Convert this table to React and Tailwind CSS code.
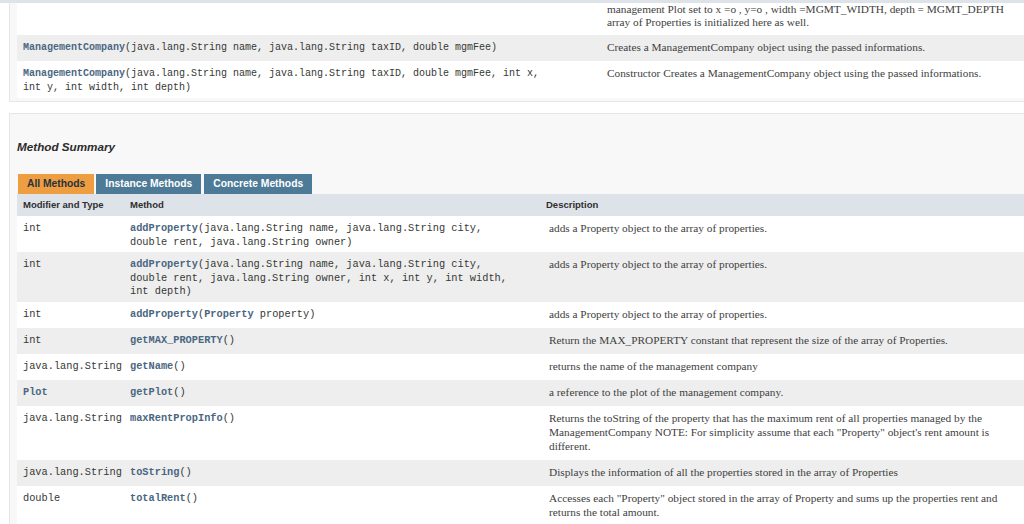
const mono = { fontFamily: '"Liberation Mono", "Courier New", monospace' };

function L({ children }) {
  return <span className="font-bold text-[#4a6782]">{children}</span>;
}

const constructors = [
  {
    sig: [],
    desc: [
      "management Plot set to x =o , y=o , width =MGMT_WIDTH, depth = MGMT_DEPTH",
      "array of Properties is initialized here as well.",
    ],
    top: true,
  },
  {
    sig: [
      <>
        <L>ManagementCompany</L>(java.lang.String name, java.lang.String taxID, double mgmFee)
      </>,
    ],
    desc: ["Creates a ManagementCompany object using the passed informations."],
  },
  {
    sig: [
      <>
        <L>ManagementCompany</L>(java.lang.String name, java.lang.String taxID, double mgmFee, int x,
      </>,
      "int y, int width, int depth)",
    ],
    desc: ["Constructor Creates a ManagementCompany object using the passed informations."],
  },
];

const methods = [
  {
    type: "int",
    sig: [
      <>
        <L>addProperty</L>(java.lang.String name, java.lang.String city,
      </>,
      "double rent, java.lang.String owner)",
    ],
    desc: ["adds a Property object to the array of properties."],
  },
  {
    type: "int",
    sig: [
      <>
        <L>addProperty</L>(java.lang.String name, java.lang.String city,
      </>,
      "double rent, java.lang.String owner, int x, int y, int width,",
      "int depth)",
    ],
    desc: ["adds a Property object to the array of properties."],
  },
  {
    type: "int",
    sig: [
      <>
        <L>addProperty</L>(<L>Property</L> property)
      </>,
    ],
    desc: ["adds a Property object to the array of properties."],
  },
  {
    type: "int",
    sig: [
      <>
        <L>getMAX_PROPERTY</L>()
      </>,
    ],
    desc: ["Return the MAX_PROPERTY constant that represent the size of the array of Properties."],
  },
  {
    type: "java.lang.String",
    sig: [
      <>
        <L>getName</L>()
      </>,
    ],
    desc: ["returns the name of the management company"],
  },
  {
    type: <L>Plot</L>,
    sig: [
      <>
        <L>getPlot</L>()
      </>,
    ],
    desc: ["a reference to the plot of the management company."],
  },
  {
    type: "java.lang.String",
    sig: [
      <>
        <L>maxRentPropInfo</L>()
      </>,
    ],
    desc: [
      "Returns the toString of the property that has the maximum rent of all properties managed by the",
      'ManagementCompany NOTE: For simplicity assume that each "Property" object\'s rent amount is',
      "different.",
    ],
  },
  {
    type: "java.lang.String",
    sig: [
      <>
        <L>toString</L>()
      </>,
    ],
    desc: ["Displays the information of all the properties stored in the array of Properties"],
  },
  {
    type: "double",
    sig: [
      <>
        <L>totalRent</L>()
      </>,
    ],
    desc: [
      'Accesses each "Property" object stored in the array of Property and sums up the properties rent and',
      "returns the total amount.",
    ],
  },
];

function Desc({ lines, className = "-mt-px mb-[4px] leading-[14px]" }) {
  return (
    <div className={`text-[11.3px] text-[#3e3e3e] ${className}`} style={{ fontFamily: '"Liberation Serif", "Times New Roman", serif' }}>
      {lines.map((l, i) => (
        <div key={i} className="whitespace-nowrap">{l}</div>
      ))}
    </div>
  );
}

export default function App() {
  return (
    <div className="w-[1024px] h-[524px] overflow-hidden bg-white text-[#353833]" style={{ fontFamily: '"Liberation Sans", Arial, sans-serif' }}>
      <div className="h-[3px] bg-[#dee3e9]" />

      {/* constructor summary tail */}
      <div className="ml-[9px] w-[1040px] border-l border-b border-[#e6e6e6] bg-[#f8f8f8] pl-[7px] pb-[3px]">
        <div className="bg-white">
          {constructors.map((c, i) => (
            <div key={i} className={`grid grid-cols-[590px_1fr] ${i % 2 ? "bg-[#eeeeee]" : "bg-white"} ${c.top ? "pb-[6px]" : "pt-[6px] pb-[3px]"}`}>
              <div className="pl-[6px] text-[10px] leading-[14px]" style={mono}>
                {c.sig.map((s, j) => (
                  <div key={j} className="whitespace-nowrap">{s}</div>
                ))}
              </div>
              <Desc lines={c.desc} className={c.top ? "leading-[13px]" : undefined} />
            </div>
          ))}
        </div>
      </div>

      {/* method summary */}
      <div className="mt-[11px] ml-[9px] w-[1040px] border-l border-t border-[#e6e6e6] bg-[#f8f8f8] pl-[7px]">
        <h3 className="pt-[26px] h-[60px] text-[11.7px] leading-[14px] font-bold italic text-[#2c2c2c]">Method Summary</h3>
        <div className="flex gap-[2px] ml-px h-[20px] text-[10.3px] font-bold">
          <span className="flex items-center px-[9px] bg-[#ee9d40] text-[#253441]">All Methods</span>
          <span className="flex items-center px-[9px] bg-[#4d7a97] text-white">Instance Methods</span>
          <span className="ml-px flex items-center px-[9px] bg-[#4d7a97] text-white">Concrete Methods</span>
        </div>
        <div className="bg-white">
          <div className="grid grid-cols-[113px_418px_1fr] h-[22px] items-center bg-[#dee3e9] text-[9.5px] font-bold text-[#2f2f2f]">
            <span className="pl-[6px]">Modifier and Type</span>
            <span>Method</span>
            <span className="-ml-[2px]">Description</span>
          </div>
          {methods.map((m, i) => (
            <div key={i} className={`grid grid-cols-[113px_419px_1fr] pt-[6px] pb-[3px] ${i % 2 ? "bg-[#eeeeee]" : "bg-white"}`}>
              <div className="pl-[6px] text-[10.3px] leading-[13.5px] whitespace-nowrap" style={mono}>{m.type}</div>
              <div className="text-[10.3px] leading-[13.5px]" style={mono}>
                {m.sig.map((s, j) => (
                  <div key={j} className="whitespace-nowrap">{s}</div>
                ))}
              </div>
              <Desc lines={m.desc} />
            </div>
          ))}
        </div>
      </div>
    </div>
  );
}
